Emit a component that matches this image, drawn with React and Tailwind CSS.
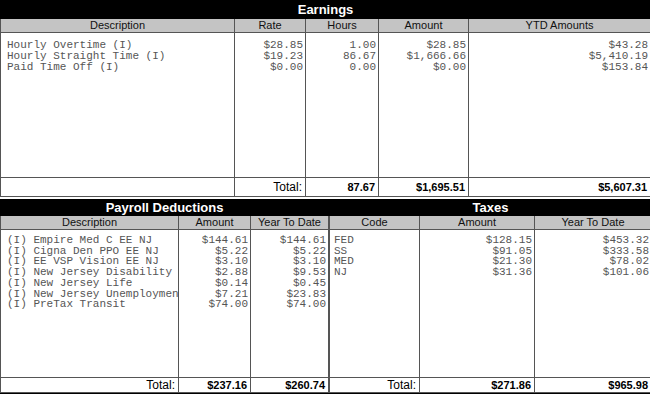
const earnings = [
  { desc: 'Hourly Overtime (I)', rate: '$28.85', hours: '1.00', amount: '$28.85', ytd: '$43.28' },
  { desc: 'Hourly Straight Time (I)', rate: '$19.23', hours: '86.67', amount: '$1,666.66', ytd: '$5,410.19' },
  { desc: 'Paid Time Off (I)', rate: '$0.00', hours: '0.00', amount: '$0.00', ytd: '$153.84' },
];

const deductions = [
  { desc: '(I) Empire Med C EE NJ', amount: '$144.61', ytd: '$144.61' },
  { desc: '(I) Cigna Den PPO EE NJ', amount: '$5.22', ytd: '$5.22' },
  { desc: '(I) EE VSP Vision EE NJ', amount: '$3.10', ytd: '$3.10' },
  { desc: '(I) New Jersey Disability', amount: '$2.88', ytd: '$9.53' },
  { desc: '(I) New Jersey Life', amount: '$0.14', ytd: '$0.45' },
  { desc: '(I) New Jersey Unemployment', amount: '$7.21', ytd: '$23.83' },
  { desc: '(I) PreTax Transit', amount: '$74.00', ytd: '$74.00' },
];

const taxes = [
  { code: 'FED', amount: '$128.15', ytd: '$453.32' },
  { code: 'SS', amount: '$91.05', ytd: '$333.58' },
  { code: 'MED', amount: '$21.30', ytd: '$78.02' },
  { code: 'NJ', amount: '$31.36', ytd: '$101.06' },
];

const th = 'border border-[#555] bg-[#c4c4c4] text-[11px] font-normal leading-none text-[#111] p-0';
const body = 'border border-[#555] align-top font-[Liberation_Mono,Courier_New,monospace] text-[11px] text-[#555] whitespace-nowrap overflow-hidden p-0';
const total = 'border border-[#555] text-[11px] font-bold leading-none text-right pr-[3px] p-0';
const totalLabel = 'border border-[#555] text-[12px] leading-none text-right pr-[3px] p-0';

function Lines({ items, right, lh }) {
  return (
    <div className={`${right ? 'text-right pr-[2px]' : 'pl-[4px]'} ${lh}`}>
      {items.map((t, i) => (
        <div key={i} className="overflow-hidden">{t}</div>
      ))}
    </div>
  );
}

export default function App() {
  return (
    <div className="w-[650px] h-[394px] bg-white overflow-hidden font-[Liberation_Sans,Arial,sans-serif] text-black">
      {/* Earnings */}
      <table className="w-[650px] table-fixed border-collapse">
        <colgroup>
          <col className="w-[234px]" />
          <col className="w-[71px]" />
          <col className="w-[73px]" />
          <col className="w-[90px]" />
          <col className="w-[182px]" />
        </colgroup>
        <thead>
          <tr className="h-[18px] bg-black">
            <th colSpan={5} className="text-white text-[13px] font-bold leading-none p-0 border border-black">Earnings</th>
          </tr>
          <tr className="h-[14px]">
            <th className={th}>Description</th>
            <th className={th}>Rate</th>
            <th className={th}>Hours</th>
            <th className={th}>Amount</th>
            <th className={th}>YTD Amounts</th>
          </tr>
        </thead>
        <tbody>
          <tr className="h-[145px]">
            <td className={body}>
              <div className="pt-[7px] pl-[2px]"><Lines items={earnings.map(e => e.desc)} lh="leading-[11px]" /></div>
            </td>
            <td className={body}>
              <div className="pt-[7px]"><Lines right items={earnings.map(e => e.rate)} lh="leading-[11px]" /></div>
            </td>
            <td className={body}>
              <div className="pt-[7px]"><Lines right items={earnings.map(e => e.hours)} lh="leading-[11px]" /></div>
            </td>
            <td className={body}>
              <div className="pt-[7px]"><Lines right items={earnings.map(e => e.amount)} lh="leading-[11px]" /></div>
            </td>
            <td className={body}>
              <div className="pt-[7px]"><Lines right items={earnings.map(e => e.ytd)} lh="leading-[11px]" /></div>
            </td>
          </tr>
          <tr className="h-[19px]">
            <td className="border border-[#555] p-0"></td>
            <td className={totalLabel}>Total:</td>
            <td className={total}>87.67</td>
            <td className={total}>$1,695.51</td>
            <td className={total}>$5,607.31</td>
          </tr>
        </tbody>
      </table>

      <div className="flex h-[2px]" />

      <div className="flex">
        {/* Payroll Deductions */}
        <table className="w-[328px] table-fixed border-collapse">
          <colgroup>
            <col className="w-[178px]" />
            <col className="w-[72px]" />
            <col className="w-[78px]" />
          </colgroup>
          <thead>
            <tr className="h-[16px] bg-black">
              <th colSpan={3} className="text-white text-[13px] font-bold leading-none p-0 border border-black">Payroll Deductions</th>
            </tr>
            <tr className="h-[14px]">
              <th className={th}>Description</th>
              <th className={th}>Amount</th>
              <th className={th}>Year To Date</th>
            </tr>
          </thead>
          <tbody>
            <tr className="h-[148px]">
              <td className={body}>
                <div className="pt-[5px] pl-[2px]"><Lines items={deductions.map(d => d.desc)} lh="leading-[10.7px]" /></div>
              </td>
              <td className={body}>
                <div className="pt-[5px]"><Lines right items={deductions.map(d => d.amount)} lh="leading-[10.7px]" /></div>
              </td>
              <td className={body}>
                <div className="pt-[5px]"><Lines right items={deductions.map(d => d.ytd)} lh="leading-[10.7px]" /></div>
              </td>
            </tr>
            <tr className="h-[15px]">
              <td className={totalLabel}>Total:</td>
              <td className={total}>$237.16</td>
              <td className={total}>$260.74</td>
            </tr>
          </tbody>
        </table>

        {/* Taxes */}
        <table className="w-[322px] table-fixed border-collapse">
          <colgroup>
            <col className="w-[90px]" />
            <col className="w-[115px]" />
            <col className="w-[117px]" />
          </colgroup>
          <thead>
            <tr className="h-[16px] bg-black">
              <th colSpan={3} className="text-white text-[13px] font-bold leading-none p-0 border border-black">Taxes</th>
            </tr>
            <tr className="h-[14px]">
              <th className={th}>Code</th>
              <th className={th}>Amount</th>
              <th className={th}>Year To Date</th>
            </tr>
          </thead>
          <tbody>
            <tr className="h-[148px]">
              <td className={body}>
                <div className="pt-[5px]"><Lines items={taxes.map(t => t.code)} lh="leading-[10.7px]" /></div>
              </td>
              <td className={body}>
                <div className="pt-[5px]"><Lines right items={taxes.map(t => t.amount)} lh="leading-[10.7px]" /></div>
              </td>
              <td className={body}>
                <div className="pt-[5px]"><Lines right items={taxes.map(t => t.ytd)} lh="leading-[10.7px]" /></div>
              </td>
            </tr>
            <tr className="h-[15px]">
              <td className={totalLabel}>Total:</td>
              <td className={total}>$271.86</td>
              <td className={total}>$965.98</td>
            </tr>
          </tbody>
        </table>
      </div>
      <div className="h-[4px] bg-black" />
    </div>
  );
}
